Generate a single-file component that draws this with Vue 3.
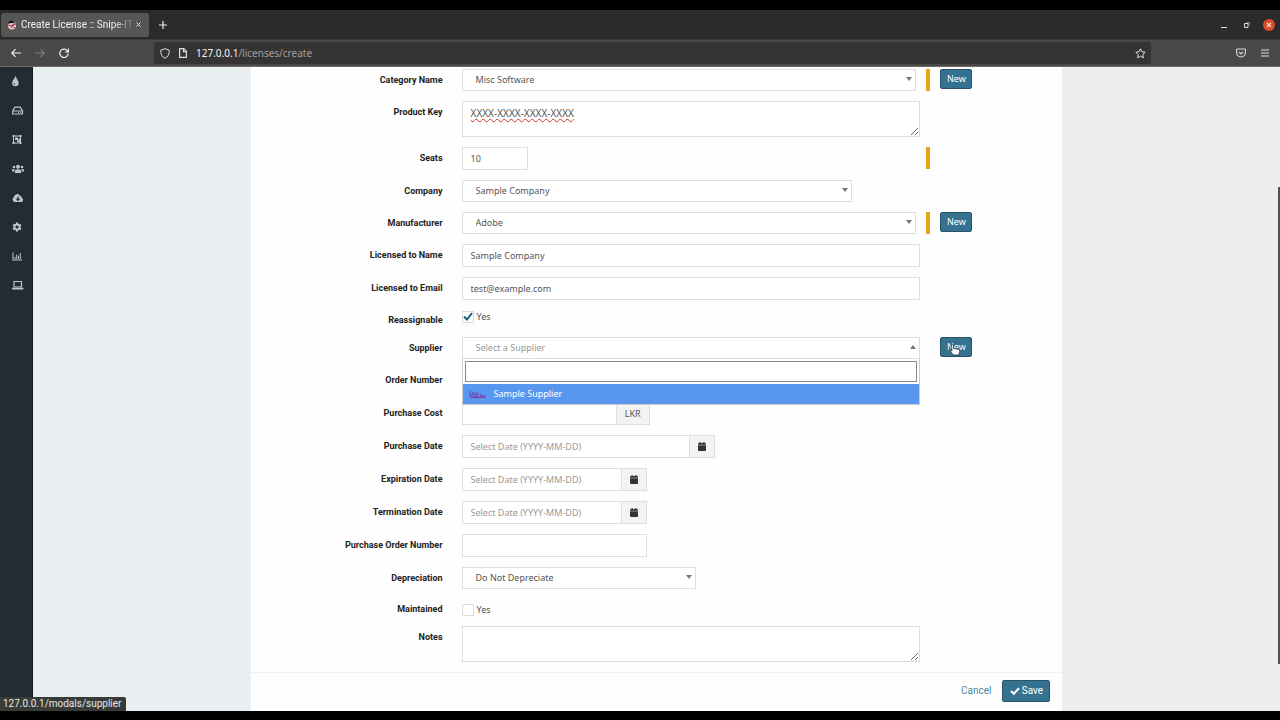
<script setup>
import { ref } from 'vue'

const navIcons = ['drop', 'drive', 'group', 'users', 'cloud', 'gear', 'chart', 'laptop']

const rows = ref([
  { id: 'category', label: 'Category Name', type: 'select', size: 'wide', value: 'Misc Software', required: true, create: true },
  { id: 'key', label: 'Product Key', type: 'textarea', value: 'XXXX-XXXX-XXXX-XXXX', misspelt: true },
  { id: 'seats', label: 'Seats', type: 'text', size: 'tiny', value: '10', required: true },
  { id: 'company', label: 'Company', type: 'select', size: 'medium', value: 'Sample Company' },
  { id: 'manufacturer', label: 'Manufacturer', type: 'select', size: 'wide', value: 'Adobe', required: true, create: true },
  { id: 'licname', label: 'Licensed to Name', type: 'text', size: 'full', value: 'Sample Company' },
  { id: 'licemail', label: 'Licensed to Email', type: 'text', size: 'full', value: 'test@example.com' },
  { id: 'reassignable', label: 'Reassignable', type: 'check', value: true, low: true },
  { id: 'supplier', label: 'Supplier', type: 'select', size: 'full', value: 'Select a Supplier', open: true, create: true },
  { id: 'order', label: 'Order Number', type: 'text', size: 'full', value: '' },
  { id: 'cost', label: 'Purchase Cost', type: 'group', size: 'cost', value: '', addon: 'LKR' },
  { id: 'pdate', label: 'Purchase Date', type: 'group', size: 'date', value: '', placeholder: 'Select Date (YYYY-MM-DD)' },
  { id: 'edate', label: 'Expiration Date', type: 'group', size: 'short', value: '', placeholder: 'Select Date (YYYY-MM-DD)' },
  { id: 'tdate', label: 'Termination Date', type: 'group', size: 'short', value: '', placeholder: 'Select Date (YYYY-MM-DD)' },
  { id: 'ponum', label: 'Purchase Order Number', type: 'text', size: 'short', value: '' },
  { id: 'depreciation', label: 'Depreciation', type: 'select', size: 'half', value: 'Do Not Depreciate' },
  { id: 'maintained', label: 'Maintained', type: 'check', value: false },
  { id: 'notes', label: 'Notes', type: 'textarea', value: '' }
])
const search = ref('')
</script>

<template>
  <div class="screen">
    <header class="tabs">
      <div class="tab">
        <svg class="favicon" viewBox="0 0 10 10"><circle cx="5" cy="5.500" r="4" fill="#eccbd3" /><path d="M1 4Q2 0 6 1L8 4Q5 2 1 4Z" fill="#160f12" /><path d="M1 5l3 1 1 2M6 5l3-1M6 7l2 1" stroke="#b3304f" fill="none" /><circle cx="5.500" cy="5.500" r="1" fill="#522" /></svg>
        <span class="tab-title">Create License :: Snipe-IT</span>
        <button class="plain" aria-label="Close tab"><svg width="5" height="5" viewBox="0 0 5 5"><path d="M.5.5l4 4M4.500.5l-4 4" stroke="#ddd" fill="none" /></svg></button>
      </div>
      <button class="plain" aria-label="New tab"><svg width="8" height="8" viewBox="0 0 8 8"><path d="M4 0v8M0 4h8" stroke="#eee" stroke-width="1.200" /></svg></button>
      <div class="window-buttons">
        <button class="plain" aria-label="Minimize"><svg width="6" height="8" viewBox="0 0 6 8"><path d="M0 6.500h6" stroke="#ddd" /></svg></button>
        <button class="plain" aria-label="Restore"><svg width="6" height="6" viewBox="0 0 6 6"><path d="M.5 1.500h3.500v4h-3.500z" stroke="#ddd" fill="none" /><path d="M3 .5h2.500v2.500" stroke="#888" fill="none" /></svg></button>
        <button class="plain" aria-label="Close window"><svg width="12" height="12" viewBox="0 0 12 12"><circle cx="6" cy="6" r="6" fill="#da4b29" /><path d="M4 4l4 4M8 4l-4 4" stroke="#fbdcd0" stroke-width="1.200" /></svg></button>
      </div>
    </header>

    <nav class="toolbar">
      <div class="history">
        <button class="plain" aria-label="Back"><svg width="10" height="10" viewBox="0 0 10 10"><path d="M10 5H1M4.500 1.200L.8 5l3.700 3.800" stroke="#eee" stroke-width="1.200" fill="none" /></svg></button>
        <button class="plain" aria-label="Forward"><svg width="10" height="10" viewBox="0 0 10 10"><path d="M0 5h9M5.500 1.200L9.200 5 5.500 8.800" stroke="#7d7c7a" stroke-width="1.200" fill="none" /></svg></button>
        <button class="plain" aria-label="Reload"><svg width="10" height="10" viewBox="0 0 10 10"><path d="M8.800 3.500A4.200 4.200 0 1 0 9.200 5.500M9.500.5v3.500H6" stroke="#eee" stroke-width="1.200" fill="none" /></svg></button>
      </div>
      <div class="address">
        <svg width="10" height="11" viewBox="0 0 10 11"><path d="M5 .7L9.300 2.200C9.400 6 8 9 5 10.300 2 9 .6 6 .7 2.200Z" stroke="#ddd" fill="none" /></svg>
        <svg width="8" height="10" viewBox="0 0 8 10"><path d="M.6.600H4.800L7.400 3.200V9.400H.6ZM4.500.6v3h3" stroke="#ddd" stroke-width="1.200" fill="none" /></svg>
        <span class="url">127.0.0.1<span class="path">/licenses/create</span></span>
        <button class="plain star" aria-label="Bookmark"><svg width="11" height="11" viewBox="0 0 11 11"><path d="M5.500.8l1.400 3 3.300.4-2.400 2.300.6 3.300-2.900-1.600-2.900 1.600.6-3.300L.8 4.200l3.300-.4z" stroke="#ddd" fill="none" stroke-linejoin="round" /></svg></button>
      </div>
      <div class="tools">
        <button class="plain" aria-label="Pocket"><svg width="10" height="10" viewBox="0 0 10 10"><path d="M1.200 1h7.600q.6 0 .6.600v3a4.400 4.400 0 0 1-8.800 0v-3q0-.6.6-.6zM3 4l2 2 2-2" stroke="#ddd" stroke-width="1.100" fill="none" /></svg></button>
        <button class="plain" aria-label="Menu"><svg width="8" height="8" viewBox="0 0 8 8"><path d="M0 1h8M0 4h8M0 7h8" stroke="#ddd" /></svg></button>
      </div>
    </nav>

    <div class="page">
      <aside class="sidebar">
        <a v-for="icon in navIcons" :key="icon" href="#" :aria-label="icon">
          <svg viewBox="0 0 12 12" width="12" height="12" fill="#b8c7ce">
            <path v-if="icon === 'drop'" d="M3.500 0C4.500 3 6.700 4.500 6.700 7A3.300 3.300 0 0 1 .1 7C.1 4.500 2.500 3 3.500 0ZM1.700 7q0 2 2 2-1.200-.5-1.200-2z" fill-rule="evenodd" />
            <g v-else-if="icon === 'drive'"><path d="M.7 6L2.800 2.200h5.400l2.300 3.800M.7 6h9.800v3H.7z" fill="none" stroke="#b8c7ce" stroke-width="1.200" /><path d="M6 7h1v1H6zM8 7h1v1H8z" /></g>
            <g v-else-if="icon === 'group'"><path d="M1.500 2h7v7h-7z" fill="none" stroke="#b8c7ce" /><path d="M.5 1h2v2h-2zM7.500 1h2v2h-2zM.5 8h2v2h-2zM7.500 8h2v2h-2zM3 3.500h3V6H3zM6.500 4.500h1.500V8h-3V6.500h1.500z" /></g>
            <g v-else-if="icon === 'users'"><circle cx="6" cy="3.700" r="2" /><circle cx="2" cy="4" r="1.300" /><circle cx="10" cy="4" r="1.300" /><path d="M2.800 10V8.500q0-2.300 3.200-2.300t3.200 2.300V10zM0 8.500V7q0-1.300 2.700-1L2 8.500zM12 8.500V7q0-1.300-2.700-1L10 8.500z" /></g>
            <path v-else-if="icon === 'cloud'" d="M2.700 10A2.700 2.700 0 0 1 2 5 3.200 3.200 0 0 1 8 3.800 2 2 0 0 1 9.800 6 2.100 2.100 0 0 1 9.500 10ZM5.300 4.800v2H3.700L6 9.200l2.300-2.400H6.700v-2z" fill-rule="evenodd" />
            <g v-else-if="icon === 'gear'"><circle cx="5" cy="6" r="2.600" fill="none" stroke="#b8c7ce" stroke-width="2" /><path d="M5 1.500v1.500M5 9v1.500M1.100 3.700l1.300.8M7.600 7.500l1.300.8M1.100 8.300l1.300-.8M7.600 4.500l1.300-.8" stroke="#b8c7ce" stroke-width="2" /></g>
            <path v-else-if="icon === 'chart'" d="M.5 2.500h1v7h8.500v1H.5zM2.500 7H3.500v2h-1zM4.200 4.500h1v4.500h-1zM6 5.800h1V9H6zM7.800 3h1v6h-1z" />
            <g v-else><path d="M2 2.500h7.500v5.500H2z" fill="none" stroke="#b8c7ce" stroke-width="1.200" /><path d="M0 8.800h11.500v.7q0 1-1 1H1q-1 0-1-1z" /></g>
          </svg>
        </a>
      </aside>

      <main class="content">
        <form class="panel" @submit.prevent>
          <div class="fields">
            <div v-for="row in rows" :key="row.id" class="row">
              <label :for="row.id" :class="{ mid: row.type === 'check', low: row.low }">{{ row.label }}</label>
              <div class="control">
                <div v-if="row.type === 'select'" class="pick" :class="row.size">
                  <select :id="row.id" :class="{ empty: row.open }"><option>{{ row.value }}</option></select>
                  <svg class="arrow" :class="{ up: row.open }" width="6" height="4" viewBox="0 0 6 4"><path d="M0 0h6L3 4z" fill="#777" /></svg>
                  <div v-if="row.open" class="dropdown">
                    <input v-model="search" type="text" aria-label="Search suppliers" />
                    <div class="option">
                      <svg width="18" height="8" viewBox="0 0 18 8"><path d="M1 1v6M3 3v4M3 3h2v4M7 2v5h2V3M11 6h6M11 4l2 2" stroke="#6b3fa8" fill="none" /><path d="M1 7.500h15" stroke="#8a3aa0" /></svg>
                      <span>Sample Supplier</span>
                    </div>
                  </div>
                </div>
                <textarea v-else-if="row.type === 'textarea'" :id="row.id" v-model="row.value" spellcheck="false" :class="{ misspelt: row.misspelt }"></textarea>
                <div v-else-if="row.type === 'check'" class="check" :class="{ lower: !row.low }">
                  <span class="box">
                    <input :id="row.id" v-model="row.value" type="checkbox" />
                    <svg v-if="row.value" width="10" height="9" viewBox="0 0 10 9"><path d="M1 4.500l3 3L9 1" stroke="#11607f" stroke-width="2" fill="none" /></svg>
                  </span>
                  <label :for="row.id">Yes</label>
                </div>
                <div v-else-if="row.type === 'group'" class="group" :class="row.size">
                  <input :id="row.id" v-model="row.value" type="text" :placeholder="row.placeholder" />
                  <span class="addon">
                    <template v-if="row.addon">{{ row.addon }}</template>
                    <svg v-else width="8" height="9" viewBox="0 0 8 9"><path d="M0 2q0-1 1-1h.5V0h1.200v1h2.600V0h1.200v1H7q1 0 1 1v.7H0zM0 3.300h8V8q0 1-1 1H1Q0 9 0 8z" fill="#333" /></svg>
                  </span>
                </div>
                <input v-else :id="row.id" v-model="row.value" type="text" :class="row.size" />
              </div>
              <div class="side">
                <span class="mark" :class="{ on: row.required }"></span>
                <button v-if="row.create" class="primary new">New
                  <svg v-if="row.open" class="cursor" width="12" height="12" viewBox="0 0 12 12"><path d="M2.500 1q1-1 2 0v3.500l5 .8q1.500.4 1.200 2L10 11H4.500L1 7q.2-1.300 2 0z" fill="#fff" stroke="#234" stroke-width=".8" /></svg>
                </button>
              </div>
            </div>
          </div>
          <footer>
            <a href="#">Cancel</a>
            <button class="primary save"><svg width="10" height="8" viewBox="0 0 10 8"><path d="M1 4l2.800 2.800L9 1.200" stroke="#fff" stroke-width="2" fill="none" /></svg>Save</button>
          </footer>
        </form>
      </main>
      <div class="scrollbar"></div>
      <div class="status">127.0.0.1/modals/supplier</div>
    </div>
  </div>
</template>

<style>
body { margin: 0; background: #000; }
</style>

<style scoped>
* { box-sizing: border-box; }
.screen { min-height: 100vh; padding: 10px 0 9px; background: #000; display: flex; flex-direction: column; font: 10px/14px Roboto, "Noto Sans", sans-serif; color: #555; }
input, textarea, select, button { font: inherit; color: inherit; margin: 0; }
svg { display: block; flex: none; }
.plain { border: 0; padding: 0; background: none; display: flex; align-items: center; }
.tabs { height: 29px; background: #2b2b2b; display: flex; align-items: center; gap: 10px; padding-left: 1px; }
.tab { width: 148px; height: 24px; border-radius: 3px; background: #565655; display: flex; align-items: center; padding: 0 8px 0 6px; gap: 4px; color: #f2f2f2; }
.favicon { width: 10px; height: 10px; }
.tab-title { flex: 1; overflow: hidden; white-space: nowrap; mask-image: linear-gradient(90deg, #000 82%, rgba(0, 0, 0, 0.2)); }
.window-buttons { margin-left: auto; display: flex; align-items: center; gap: 17px; padding-right: 5px; }
.window-buttons .plain:last-child { margin-left: -4px; }
.toolbar { height: 28px; background: #4a4948; border-top: 1px solid #3c3b3a; border-bottom: 1px solid #6b6a69; display: flex; align-items: center; }
.history { width: 154px; display: flex; gap: 14px; padding-left: 11px; }
.address { flex: 1; height: 22px; background: #353433; border-radius: 3px; display: flex; align-items: center; gap: 9px; padding: 0 5px 0 6px; }
.url { font-family: "Noto Sans", sans-serif; color: #f5f5f5; }
.path { color: #a09f9d; }
.star { margin-left: auto; }
.tools { width: 129px; display: flex; justify-content: flex-end; gap: 15px; padding-right: 11px; }
.page { flex: 1; display: flex; position: relative; background: linear-gradient(90deg, #eaeff2 20%, #eee 84%); }
.sidebar { width: 33px; background: #222d32; border-right: 1px solid #141d20; }
.sidebar a { height: 29px; display: flex; align-items: center; padding-left: 12px; }
.content { flex: 1; padding: 0 17%; display: flex; }
.panel { flex: 1; min-width: 0; background: #fefefe; display: flex; flex-direction: column; }
.fields { display: flex; flex-direction: column; gap: 10px; padding: 2px 0 10px; }
.row { display: grid; grid-template-columns: 211fr 459fr 142fr; align-items: start; }
.row > label { text-align: right; padding: 4px 19px 0 0; font-size: 9px; line-height: 14px; font-weight: 700; color: #222; }
.row > label.mid { padding-top: 4px; line-height: 13px; }
.control { min-width: 0; display: flex; font: 9px/14px "Noto Sans", sans-serif; }
.control input[type="text"], textarea, select { border: 1px solid #dcdfe1; border-radius: 0; background: #fff; outline: none; min-width: 0; }
.control input[type="text"] { height: 23px; padding: 0 8px; }
select { appearance: none; width: 100%; height: 22px; padding: 0 13px; display: block; }
select.empty { color: #999; }
textarea { width: 100%; height: 36px; padding: 4px 8px; display: block; resize: vertical; }
.misspelt { font-size: 10px; text-decoration: underline wavy #c33 1px; }
::placeholder { color: #999; }
.pick { position: relative; }
.full { width: 100%; }
.wide { width: 99%; }
.medium { width: 85%; }
.half { width: 51%; }
.date { width: 55.3%; }
.cost { width: 41%; }
.short { width: 40.4%; }
.tiny { width: 14.5%; }
.arrow { position: absolute; right: 4px; top: 8px; }
.up { transform: rotate(180deg); }
.dropdown { position: absolute; z-index: 2; top: 22px; left: 0; right: 0; background: #fff; border: 1px solid #ccc; border-top: 0; }
.control .dropdown input { display: block; width: calc(100% - 4px); height: 21px; margin: 2px 2px 2px; border: 1px solid #7f8f99; }
.option { height: 20px; background: #5897ef; color: #fff; display: flex; align-items: center; gap: 7px; padding-left: 6px; }
.check { height: 17px; display: flex; align-items: flex-start; gap: 3px; }
.lower { padding-top: 4px; }
.check label { line-height: 13px; }
.box { position: relative; width: 12px; height: 12px; margin-top: 1px; }
.box input { appearance: none; display: block; width: 12px; height: 12px; border: 1px solid #ddd; background: #fff; }
.box svg { position: absolute; left: 1px; top: 1px; pointer-events: none; }
.group { display: flex; }
.group input { flex: 1; }
.addon { border: 1px solid #dcdfe1; border-left: 0; background: #f3f3f3; padding: 0 8px; display: flex; align-items: center; }
.side { display: flex; align-items: flex-start; gap: 10px; padding-left: 6px; }
.mark { width: 4px; }
.on { height: 22px; background: #e0a818; }
.primary { background: #35728f; border: 1px solid #2a5368; border-radius: 2px; color: #fff; padding: 0; }
.new { position: relative; width: 32px; height: 20px; font: 9px/14px "Noto Sans", sans-serif; }
.cursor { position: absolute; left: 8px; top: 6px; }
footer { flex: 1; border-top: 1px solid #f1f1f1; padding: 7px 12px; display: flex; gap: 11px; align-items: flex-start; justify-content: flex-end; }
footer a { color: #4d88a3; text-decoration: none; line-height: 22px; }
.save { width: 48px; height: 22px; display: flex; align-items: center; justify-content: center; gap: 2px; }
.scrollbar { position: absolute; right: 0; top: 120px; width: 2px; height: 74%; background: #4b5557; }
.status { position: absolute; left: 0; bottom: 0; height: 14px; padding: 0 4px 0 3px; background: #393b39; color: #e6e6e6; border-radius: 0 2px 0 0; }
</style>
